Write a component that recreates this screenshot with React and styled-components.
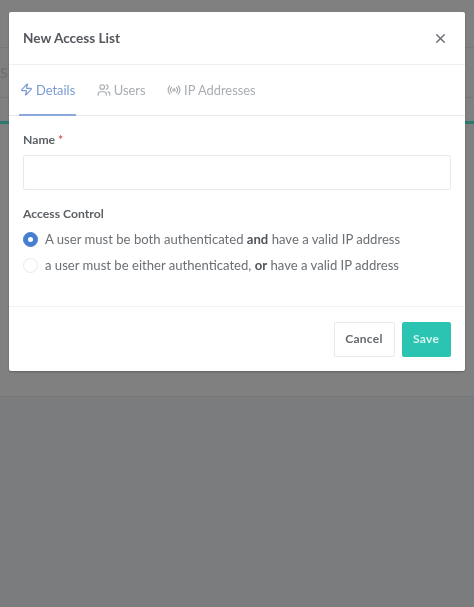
import React from "react"
import styled, { createGlobalStyle } from "styled-components"
import { Zap, Users, Radio, X } from "lucide-react"

const Global = createGlobalStyle`
  html, body {
    margin: 0;
    padding: 0;
    height: 100%;
    background: #7b7c7e;
    font-family: Lato, "Noto Sans", sans-serif;
  }
  * {
    box-sizing: border-box;
  }
`

const Page = styled.div`
  height: 607px;
  overflow: hidden;
  display: flex;
  flex-direction: column;
  background: #7b7c7e;
`
const PageBand = styled.div`
  height: ${props => props.$height}px;
  flex: none;
  background: #808080;
  color: #6f6f6f;
  font-size: 14px;
  font-weight: 600;
  display: flex;
  align-items: center;
  border-bottom: ${props => props.$line || "1px solid #777"};
`

const Overlay = styled.div`
  position: fixed;
  inset: 0;
  padding: 12px 9px;
`
const Modal = styled.div`
  width: 456px;
  height: 359px;
  background: #fff;
  border-radius: 2px;
  display: flex;
  flex-direction: column;
  box-shadow: 0 1px 2px rgba(0, 0, 0, 0.25);
`
const Header = styled.div`
  height: 53px;
  flex: none;
  padding: 0 17px 0 14px;
  display: flex;
  align-items: center;
  justify-content: space-between;
  border-bottom: 1px solid #eeeff0;
`
const Title = styled.h3`
  margin: 0;
  font-size: 13.6px;
  font-weight: 700;
  color: #54585d;
`
const CloseButton = styled.button`
  border: 0;
  padding: 0;
  background: none;
  color: #6f7378;
  display: flex;
`
const Tabs = styled.div`
  height: 51px;
  flex: none;
  padding: 0 10px;
  display: flex;
  gap: 19.5px;
  border-bottom: 1px solid #e6e8e9;
`
const Tab = styled.div`
  height: 51px;
  display: flex;
  align-items: center;
  gap: 3px;
  padding: 0 1px;
  font-size: 12.9px;
  color: ${props => (props.$active ? "#7a9ad2" : "#a9adb1")};
  border-bottom: 2px solid ${props => (props.$active ? "#8ba8dc" : "transparent")};
`
const Body = styled.div`
  flex: 1;
  padding: 16px 14px 0;
  display: flex;
  flex-direction: column;
`
const Label = styled.label`
  font-size: 12.2px;
  line-height: 15px;
  font-weight: 700;
  color: #5c6166;
`
const Required = styled.span`
  color: #d9534f;
`
const NameInput = styled.input`
  display: block;
  width: 100%;
  height: 35px;
  margin: 8px 0 16px;
  border: 1px solid #e8e9eb;
  border-radius: 2px;
  background: #fff;
`
const Options = styled.div`
  margin-top: 8px;
  display: flex;
  flex-direction: column;
  gap: 6px;
`
const Option = styled.div`
  height: 20px;
  display: flex;
  align-items: center;
  gap: 7px;
  font-size: 13.1px;
  color: #6a6f74;
  b {
    font-weight: 700;
    color: #50555a;
  }
`
const RadioDot = styled.span`
  width: 15px;
  height: 15px;
  flex: none;
  border-radius: 50%;
  background: ${props => (props.$checked ? "#467fcf" : "#fff")};
  border: 1px solid ${props => (props.$checked ? "#467fcf" : "#e8e9eb")};
  display: flex;
  align-items: center;
  justify-content: center;
  &::after {
    content: "";
    width: 5px;
    height: 5px;
    border-radius: 50%;
    background: ${props => (props.$checked ? "#fff" : "transparent")};
  }
`
const Footer = styled.div`
  height: 65px;
  flex: none;
  padding: 0 14px;
  display: flex;
  align-items: center;
  justify-content: flex-end;
  gap: 7px;
  border-top: 1px solid #f0f1f2;
`
const Button = styled.button`
  height: 35px;
  width: ${props => props.$width}px;
  padding: 0 1px 2px 0;
  border-radius: 2px;
  font-family: inherit;
  font-size: 12px;
  font-weight: 700;
  letter-spacing: 0.3px;
  color: ${props => (props.$primary ? "#d8f5f0" : "#65696e")};
  background: ${props => (props.$primary ? "#2bc4b3" : "#fff")};
  border: 1px solid ${props => (props.$primary ? "#2bc4b3" : "#e8e9eb")};
`

const App = () => (
  <>
    <Global />
    <Page>
      <PageBand $height={48} />
      <PageBand $height={50}>S</PageBand>
      <PageBand $height={26} $line="3px solid #2b7a70" />
      <PageBand $height={273} />
    </Page>
    <Overlay>
      <Modal>
        <Header>
          <Title>New Access List</Title>
          <CloseButton aria-label="Close">
            <X size={15} strokeWidth={2.4} />
          </CloseButton>
        </Header>
        <Tabs>
          <Tab $active>
            <Zap size={13} strokeWidth={2.2} />
            Details
          </Tab>
          <Tab>
            <Users size={14} />
            Users
          </Tab>
          <Tab>
            <Radio size={14} />
            IP Addresses
          </Tab>
        </Tabs>
        <Body>
          <Label>
            Name <Required>*</Required>
          </Label>
          <NameInput />
          <Label>Access Control</Label>
          <Options>
            <Option>
              <RadioDot $checked />
              <span>
                A user must be both authenticated <b>and</b> have a valid IP address
              </span>
            </Option>
            <Option>
              <RadioDot />
              <span>
                a user must be either authenticated, <b>or</b> have a valid IP address
              </span>
            </Option>
          </Options>
        </Body>
        <Footer>
          <Button $width={61}>Cancel</Button>
          <Button $primary $width={49}>
            Save
          </Button>
        </Footer>
      </Modal>
    </Overlay>
  </>
)

export default App
